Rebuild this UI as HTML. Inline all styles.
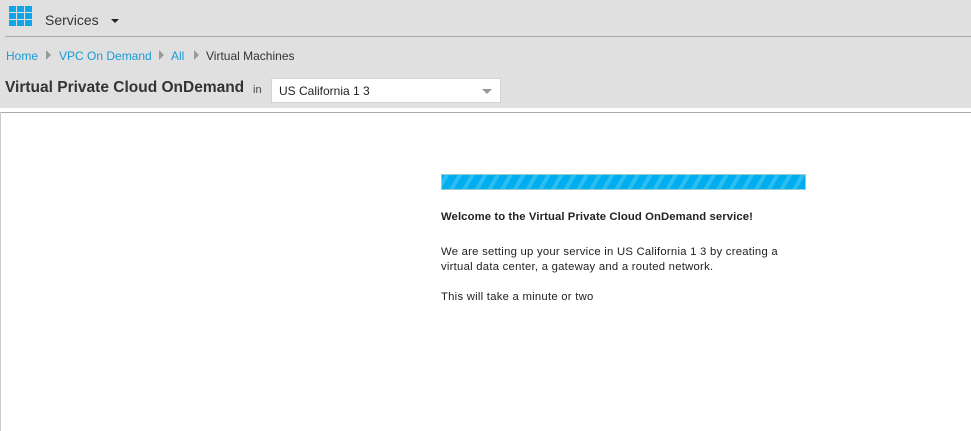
<!DOCTYPE html>
<html><head><style>
*{margin:0;padding:0;box-sizing:border-box}
body{width:971px;height:431px;background:#fff;font-family:"Liberation Sans",sans-serif;position:relative;overflow:hidden}
.hdr{position:absolute;left:0;top:0;width:971px;height:108px;background:#e0e0e0}
.grid{position:absolute;left:9px;top:6px;width:22px;height:21px}
.grid i{position:absolute;width:7px;height:6px;background:#0ea5e9}
.svc{position:absolute;left:45px;top:12px;font-size:14px;color:#333}
.caret{position:absolute;left:111px;top:19px;border-left:4px solid transparent;border-right:4px solid transparent;border-top:4px solid #222}
.hl{position:absolute;left:5px;top:36px;width:966px;height:1px;background:#a9a9a9}
.bc{position:absolute;top:49px;font-size:12px;color:#1a9ad6}
.tri{position:absolute;top:50px;border-top:5px solid transparent;border-bottom:5px solid transparent;border-left:5px solid #9a9a9a}
h1{position:absolute;left:5px;top:79px;font-size:15.5px;font-weight:bold;color:#333}
.in{position:absolute;left:253px;top:84px;font-size:11px;color:#444}
.sel{position:absolute;left:271px;top:78px;width:230px;height:25px;background:#fff;border:1px solid #d4d4d4;font-size:12px;color:#222;padding:5px 0 0 7px}
.sel:after{content:"";position:absolute;right:8px;top:10px;border-left:5px solid transparent;border-right:5px solid transparent;border-top:5px solid #999}
.l2{position:absolute;left:0;top:112px;width:971px;height:1px;background:#a9a9a9}
.lb{position:absolute;left:0;top:112px;width:1px;height:319px;background:#ccc}
.bar{position:absolute;left:441px;top:174px;width:365px;height:16px;border:1px solid #9cc;background:repeating-linear-gradient(-60deg,#00aeef 0 7px,#2bbef2 7px 11px)}
.t{position:absolute;left:441px;font-size:11.3px;color:#222;line-height:15px;letter-spacing:0.25px}
</style></head><body>
<div class="hdr"></div>
<div class="grid">
<i style="left:0;top:0"></i><i style="left:8px;top:0"></i><i style="left:16px;top:0"></i>
<i style="left:0;top:7px"></i><i style="left:8px;top:7px"></i><i style="left:16px;top:7px"></i>
<i style="left:0;top:14px"></i><i style="left:8px;top:14px"></i><i style="left:16px;top:14px"></i>
</div>
<div class="svc">Services</div><div class="caret"></div>
<div class="hl"></div>
<div class="bc" style="left:6px">Home</div><div class="tri" style="left:46px"></div>
<div class="bc" style="left:59px">VPC On Demand</div><div class="tri" style="left:159px"></div>
<div class="bc" style="left:171px">All</div><div class="tri" style="left:194px"></div>
<div class="bc" style="left:206px;color:#333">Virtual Machines</div>
<h1>Virtual Private Cloud OnDemand</h1>
<div class="in">in</div>
<div class="sel">US California 1 3</div>
<div class="l2"></div><div class="lb"></div>
<div class="bar"></div>
<div class="t" style="top:210px;font-weight:bold;letter-spacing:0.1px">Welcome to the Virtual Private Cloud OnDemand service!</div>
<div class="t" style="top:245px">We are setting up your service in US California 1 3 by creating a<br>virtual data center, a gateway and a routed network.</div>
<div class="t" style="top:290px">This will take a minute or two</div>
</body></html>
